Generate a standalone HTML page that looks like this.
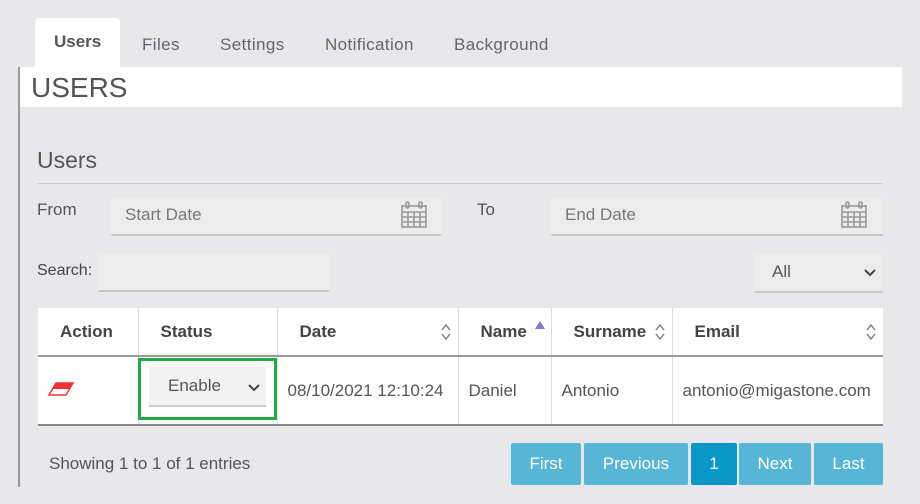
<!DOCTYPE html>
<html><head><style>
*{box-sizing:border-box;margin:0;padding:0}
body{width:920px;height:504px;background:#e8e8ea;font-family:"Liberation Sans",sans-serif;color:#555;position:relative;overflow:hidden;font-size:17px}
.a{position:absolute}
.tab{position:absolute;top:33px;font-size:17px;color:#666;letter-spacing:0.4px}
.inp{position:absolute;background:#ececec;border-bottom:2px solid #c8c8c8;border-radius:2px;font-size:17px;color:#777}
th,td{border-right:1px solid #ddd}
table{border-collapse:collapse;position:absolute;left:38px;top:308px;width:845px;background:#fff;font-size:17px}
th{height:48px;text-align:left;font-weight:bold;color:#444;border-bottom:2px solid #999;padding-left:22px;position:relative}
td{height:69px;color:#555;padding-left:10px;border-bottom:2px solid #888}
.srt{position:absolute;right:6px;top:15px}
.btn{position:absolute;top:443px;height:42px;background:#57b5d6;color:#fff;font-size:17px;text-align:center;line-height:42px;border-radius:2px}
</style></head><body>
<div class="a" style="left:35px;top:18px;width:85px;height:52px;background:#fff;border-radius:4px 4px 0 0"></div>
<div class="tab" style="left:54px;font-weight:bold;color:#555;top:32px;letter-spacing:0">Users</div>
<div class="tab" style="left:142px;top:35px">Files</div>
<div class="tab" style="left:220px;top:35px">Settings</div>
<div class="tab" style="left:325px;top:35px">Notification</div>
<div class="tab" style="left:454px;top:35px">Background</div>
<div class="a" style="left:18px;top:67px;width:2px;height:420px;background:#999"></div>
<div class="a" style="left:20px;top:67px;width:882px;height:40px;background:#fff"></div>
<div class="a" style="left:31px;top:72px;font-size:28px;color:#555">USERS</div>
<div class="a" style="left:37px;top:147px;font-size:23px;color:#555">Users</div>
<div class="a" style="left:37px;top:183px;width:846px;height:1px;background:#ccc"></div>
<div class="a" style="left:37px;top:200px">From</div>
<div class="inp" style="left:111px;top:198px;width:331px;height:38px;padding:7px 14px">Start Date</div>
<div class="a" style="left:477px;top:200px">To</div>
<div class="inp" style="left:551px;top:198px;width:332px;height:38px;padding:7px 14px">End Date</div>
<svg class="a" style="left:401px;top:201px" width="26" height="27" viewBox="0 0 26 27"><g fill="none" stroke="#999" stroke-width="1.6"><rect x="1" y="5" width="24" height="21"/><path d="M1 11H25M1 16H25M1 21H25M7 11V26M13 11V26M19 11V26"/><rect x="5" y="1" width="3" height="6" rx="1.5"/><rect x="18" y="1" width="3" height="6" rx="1.5"/></g></svg>
<svg class="a" style="left:841px;top:201px" width="26" height="27" viewBox="0 0 26 27"><g fill="none" stroke="#999" stroke-width="1.6"><rect x="1" y="5" width="24" height="21"/><path d="M1 11H25M1 16H25M1 21H25M7 11V26M13 11V26M19 11V26"/><rect x="5" y="1" width="3" height="6" rx="1.5"/><rect x="18" y="1" width="3" height="6" rx="1.5"/></g></svg>
<div class="a" style="left:37px;top:262px;color:#444;font-size:16px">Search:</div>
<div class="inp" style="left:98px;top:254px;width:232px;height:38px"></div>
<div class="inp" style="left:754px;top:254px;width:129px;height:39px;padding:8px 18px;color:#555">All</div>
<svg class="a" style="left:864px;top:269px" width="12" height="8"><path d="M1 1l5 5 5-5" stroke="#444" stroke-width="2" fill="none"/></svg>
<table>
<tr><th style="width:100px;padding-left:22px">Action</th><th style="width:139px">Status</th><th style="width:181px">Date<svg class="srt" width="12" height="18"><path d="M2 7l4-5 4 5M2 11l4 5 4-5" stroke="#888" stroke-width="1.5" fill="none"/></svg></th><th style="width:93px">Name<svg class="srt" style="top:13px" width="10" height="8"><path d="M0 8L5 0L10 8Z" fill="#7a7ad8"/></svg></th><th style="width:121px">Surname<svg class="srt" width="12" height="18"><path d="M2 7l4-5 4 5M2 11l4 5 4-5" stroke="#888" stroke-width="1.5" fill="none"/></svg></th><th style="border-right:none">Email<svg class="srt" width="12" height="18"><path d="M2 7l4-5 4 5M2 11l4 5 4-5" stroke="#888" stroke-width="1.5" fill="none"/></svg></th></tr>
<tr><td><svg width="26" height="14"><path d="M8 1H25L18 13H1Z" fill="#fff" stroke="#e33" stroke-width="1.5"/><path d="M8 1H25L21 7H4Z" fill="#e33"/></svg></td><td></td><td>08/10/2021 12:10:24</td><td>Daniel</td><td>Antonio</td><td style="border-right:none">antonio@migastone.com</td></tr>
</table>
<div class="a" style="left:138px;top:358px;width:139px;height:62px;border:3px solid #22aa44"></div>
<div class="a" style="left:149px;top:367px;width:117px;height:40px;background:#f2f2f2;border-bottom:2px solid #ccc;padding:9px 0 0 19px;color:#555">Enable</div>
<svg class="a" style="left:248px;top:384px" width="12" height="8"><path d="M1 1l5 5 5-5" stroke="#444" stroke-width="2" fill="none"/></svg>
<div class="a" style="left:49px;top:454px;color:#555">Showing 1 to 1 of 1 entries</div>
<div class="btn" style="left:511px;width:70px">First</div>
<div class="btn" style="left:584px;width:104px">Previous</div>
<div class="btn" style="left:691px;width:46px;background:#0a98c8">1</div>
<div class="btn" style="left:739px;width:72px">Next</div>
<div class="btn" style="left:814px;width:69px">Last</div>
</body></html>
